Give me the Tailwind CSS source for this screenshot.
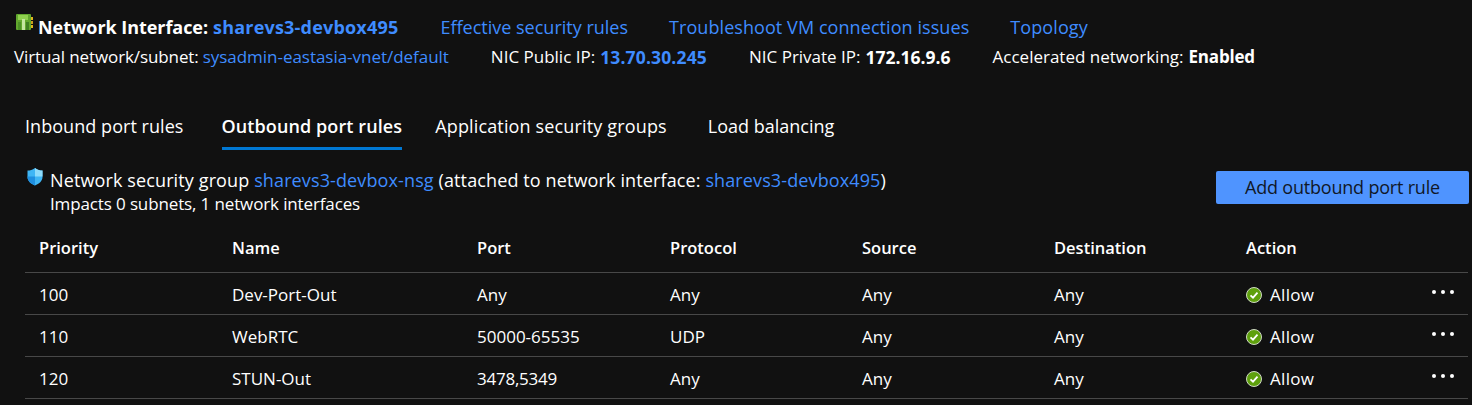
<!DOCTYPE html>
<html lang="en">
<head>
    <meta charset="UTF-8">
    <title>Network settings</title>
    <script src="https://cdn.jsdelivr.net/npm/@tailwindcss/browser@4"></script>
</head>
<body class="bg-[#111111] text-white font-['Open_Sans',sans-serif] text-[17px] leading-[22px] h-[405px] overflow-hidden">

    <!-- header -->
    <div class="pl-[14px] pt-[15px]">
        <div class="flex items-center h-[24px] text-[18px] whitespace-nowrap">
            <svg class="w-[20px] h-[20px] mt-[-6px] ml-[2px]" viewBox="0 0 20 20">
                <rect x="0" y="0" width="15" height="16" rx="1" fill="#62a82e"/>
                <rect x="2" y="1" width="10" height="5" fill="#8fd04e"/>
                <rect x="6" y="5" width="3" height="11" fill="#c4e6a0"/>
                <rect x="10" y="8" width="3" height="8" fill="#3f7f22"/>
                <rect x="2" y="8" width="3" height="8" fill="#4c9126"/>
                <rect x="15" y="3" width="2" height="3" fill="#e0b81c"/>
                <rect x="15" y="7" width="2" height="3" fill="#c89f18"/>
                <rect x="15" y="11" width="2" height="3" fill="#e0b81c"/>
            </svg>
            <span class="ml-[2px] font-bold tracking-[-0.05px]">Network Interface:</span>
            <span class="ml-[5px] font-bold text-[#3f8cff] tracking-[0.2px]">sharevs3-devbox495</span>
            <div class="flex gap-[41px] ml-[42px] text-[#3f8cff]">
                <span>Effective security rules</span>
                <span class="tracking-[0.07px]">Troubleshoot VM connection issues</span>
                <span class="tracking-[0.1px]">Topology</span>
            </div>
        </div>
        <div class="flex h-[24px] items-center mt-[6px] whitespace-nowrap">
            <span class="tracking-[-0.1px]">Virtual network/subnet:</span>
            <span class="ml-[4px] text-[#3f8cff] tracking-[-0.03px]">sysadmin-eastasia-vnet/default</span>
            <span class="ml-[42px]">NIC Public IP:</span>
            <span class="ml-[5px] font-bold text-[#3f8cff] text-[17.5px] tracking-[0.15px]">13.70.30.245</span>
            <span class="ml-[42px]">NIC Private IP:</span>
            <span class="ml-[5px] font-bold text-[17.5px]">172.16.9.6</span>
            <span class="ml-[42px]">Accelerated networking:</span>
            <span class="ml-[5px] font-bold tracking-[-0.2px]">Enabled</span>
        </div>
    </div>

    <!-- tabs -->
    <div class="flex pl-[25px] mt-[44px] text-[18px] h-[37px] whitespace-nowrap">
        <div class="pt-[2px] tracking-[0.05px]">Inbound port rules</div>
        <div class="ml-[38px] pt-[2px] font-semibold tracking-[0.1px] border-b-[3px] border-[#0078d4] h-[37px]">Outbound port rules</div>
        <div class="ml-[33px] pt-[2px] tracking-[0.15px]">Application security groups</div>
        <div class="ml-[41px] pt-[2px]">Load balancing</div>
    </div>

    <!-- nsg info -->
    <div class="flex mt-[20px] pl-[25px] pr-[3px] h-[48px]">
        <svg class="w-[20px] h-[20px] mt-[-3px] shrink-0" viewBox="0 0 20 20">
            <path d="M10 1 C7.5 3 5 3.5 2.5 3.5 V10 C2.5 14 6 17 10 18.5 C14 17 17.5 14 17.5 10 V3.5 C15 3.5 12.5 3 10 1 Z" fill="#3fb6f5"/>
            <path d="M10 1 C12.5 3 15 3.5 17.5 3.5 V9.5 H10 Z" fill="#8fdcfb"/>
            <path d="M10 9.5 H2.5 V10 C2.5 14 6 17 10 18.5 Z" fill="#1f8fe0"/>
        </svg>
        <div class="ml-[5px] whitespace-nowrap">
            <div class="h-[22px] mt-[-1px] text-[18px] tracking-[0.12px]">Network security group <span class="text-[#3f8cff]">sharevs3-devbox-nsg</span> (attached to network interface: <span class="text-[#3f8cff]">sharevs3-devbox495</span>)</div>
            <div class="mt-[2px] tracking-[-0.13px]">Impacts 0 subnets, 1 network interfaces</div>
        </div>
        <button class="ml-auto w-[253px] h-[33px] mt-[1px] pb-[2px] bg-[#4f94ff] rounded-[2px] text-[#111827] text-[18px] tracking-[-0.2px]">Add outbound port rule</button>
    </div>

    <!-- rules -->
    <div class="ml-[25px] w-[1443px] mt-[9px]">
        <div class="grid grid-cols-[193px_245px_193px_192px_192px_192px_1fr] pl-[14px] h-[46px] pb-[4px] items-center border-b border-[#484848] font-semibold text-[16.5px]">
            <div>Priority</div><div>Name</div><div>Port</div><div>Protocol</div><div>Source</div><div>Destination</div><div>Action</div>
        </div>
        <div class="grid grid-cols-[193px_245px_193px_192px_192px_192px_1fr] pl-[14px] pt-[2px] h-[42px] items-center border-b border-[#484848]">
            <div>100</div><div>Dev-Port-Out</div><div>Any</div><div>Any</div><div>Any</div><div>Any</div>
            <div class="flex items-center">
                <svg class="w-[16px] h-[16px] mr-[8px]" viewBox="0 0 16 16"><circle cx="8" cy="8" r="7.5" fill="#5ea00d" stroke="#cfd8c4" stroke-width="1"/><path d="M4.5 8.3 L7 10.6 L11.5 5.6" fill="none" stroke="white" stroke-width="1.8"/></svg>
                <span class="tracking-[0.3px]">Allow</span>
                <span class="ml-auto mr-[14px] mt-[-6px] flex gap-[5px]"><i class="w-[4px] h-[4px] rounded-full bg-white"></i><i class="w-[4px] h-[4px] rounded-full bg-white"></i><i class="w-[4px] h-[4px] rounded-full bg-white"></i></span>
            </div>
        </div>
        <div class="grid grid-cols-[193px_245px_193px_192px_192px_192px_1fr] pl-[14px] pt-[2px] h-[42px] items-center border-b border-[#484848]">
            <div>110</div><div>WebRTC</div><div>50000-65535</div><div>UDP</div><div>Any</div><div>Any</div>
            <div class="flex items-center">
                <svg class="w-[16px] h-[16px] mr-[8px]" viewBox="0 0 16 16"><circle cx="8" cy="8" r="7.5" fill="#5ea00d" stroke="#cfd8c4" stroke-width="1"/><path d="M4.5 8.3 L7 10.6 L11.5 5.6" fill="none" stroke="white" stroke-width="1.8"/></svg>
                <span class="tracking-[0.3px]">Allow</span>
                <span class="ml-auto mr-[14px] mt-[-6px] flex gap-[5px]"><i class="w-[4px] h-[4px] rounded-full bg-white"></i><i class="w-[4px] h-[4px] rounded-full bg-white"></i><i class="w-[4px] h-[4px] rounded-full bg-white"></i></span>
            </div>
        </div>
        <div class="grid grid-cols-[193px_245px_193px_192px_192px_192px_1fr] pl-[14px] pt-[2px] h-[42px] items-center border-b border-[#484848]">
            <div>120</div><div>STUN-Out</div><div class="tracking-[-0.25px]">3478,5349</div><div>Any</div><div>Any</div><div>Any</div>
            <div class="flex items-center">
                <svg class="w-[16px] h-[16px] mr-[8px]" viewBox="0 0 16 16"><circle cx="8" cy="8" r="7.5" fill="#5ea00d" stroke="#cfd8c4" stroke-width="1"/><path d="M4.5 8.3 L7 10.6 L11.5 5.6" fill="none" stroke="white" stroke-width="1.8"/></svg>
                <span class="tracking-[0.3px]">Allow</span>
                <span class="ml-auto mr-[14px] mt-[-6px] flex gap-[5px]"><i class="w-[4px] h-[4px] rounded-full bg-white"></i><i class="w-[4px] h-[4px] rounded-full bg-white"></i><i class="w-[4px] h-[4px] rounded-full bg-white"></i></span>
            </div>
        </div>
    </div>
</body>
</html>
